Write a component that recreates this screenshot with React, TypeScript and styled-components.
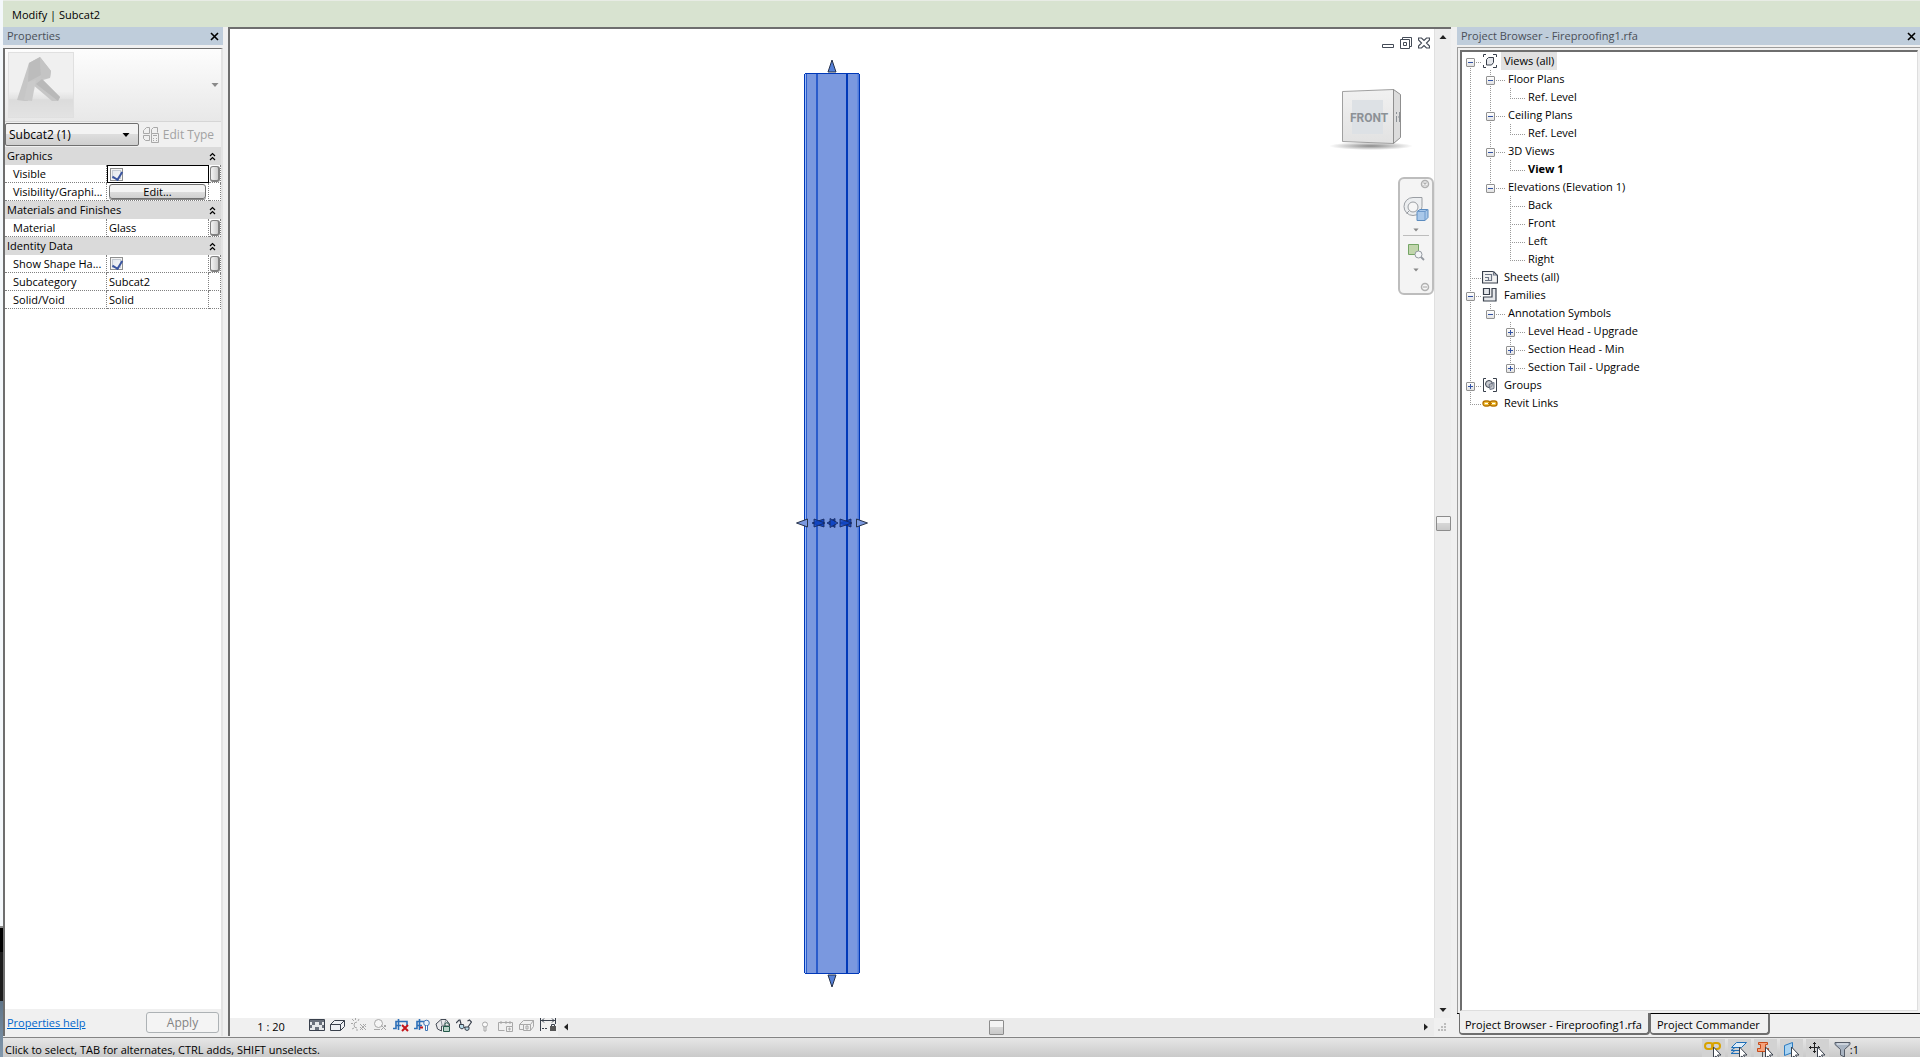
import React from "react";
import styled, { createGlobalStyle, css } from "styled-components";

const Global = createGlobalStyle`
  * { box-sizing: border-box; }
  html, body { margin: 0; padding: 0; }
  body, button, select, input {
    font-family: "Open Sans", "Noto Sans", sans-serif;
    font-size: 11px;
    line-height: 18px;
    color: #000;
  }
  svg { display: block; }
`;

/* ---------- shell ---------- */

const Shell = styled.div`
  display: flex;
  height: 100vh;
  overflow: hidden;
  background: #f0f0f0;
`;

const DesktopEdge = styled.div`
  flex: 0 0 3px;
  display: flex;
  flex-direction: column;
  background: #f4f8fb;
  &::after {
    content: "";
    height: 129px;
    margin-top: auto;
    border-top: 2px solid #8c8c8c;
    background: linear-gradient(#000 0 24px, #1c1c1c 24px 73px, #5f7488 73px, #8298ad);
  }
`;

const Frame = styled.div`
  flex: 1;
  min-width: 0;
  display: flex;
  flex-direction: column;
`;

const OptionsBar = styled.header`
  height: 27px;
  border-top: 1px solid #e8ece5;
  background: #d8e3d0;
  padding: 0 9px;
  line-height: 27px;
`;

const Workspace = styled.div`
  flex: 1;
  min-height: 0;
  display: flex;
`;

/* ---------- docked panels ---------- */

const Panel = styled.section<{ $width: number }>`
  flex: 0 0 ${(p) => p.$width}px;
  display: flex;
  flex-direction: column;
  min-height: 0;
`;

const PanelTitle = styled.div`
  display: flex;
  align-items: center;
  justify-content: space-between;
  height: 18px;
  padding: 0 4px;
  background: #bfcddb;
  color: #4a4f58;
`;

const PanelName = styled.h2`
  margin: 0;
  font-size: 11px;
  font-weight: 400;
  line-height: 20px;
`;

const IconButton = styled.button`
  display: flex;
  align-items: center;
  justify-content: center;
  padding: 0;
  border: 0;
  background: none;
`;

const PropertiesBody = styled.div`
  flex: 1;
  min-height: 0;
  display: flex;
  flex-direction: column;
  margin: 3px 0 1px;
  border-top: 1px solid #6e6e6e;
  border-left: 2px solid #6e6e6e;
  border-right: 2px solid #e3e3e3;
  background: #f0f0f0;
`;

const TypePicker = styled.button`
  display: flex;
  align-items: center;
  justify-content: space-between;
  height: 73px;
  padding: 2px 2px 2px 3px;
  border: 0;
  border-bottom: 1px solid #d6d6d6;
  background: linear-gradient(#fdfdfd, #e8e8e8);
`;

const TypeThumb = styled.span`
  width: 66px;
  height: 66px;
  border: 1px solid #e0e0e0;
  background: linear-gradient(#f0f0f0 0 60%, #dedede 75%, #ececec);
`;

const TypeRow = styled.div`
  display: flex;
  align-items: center;
  justify-content: space-between;
  height: 25px;
  padding-right: 7px;
`;

const SelectBox = styled.label`
  display: grid;
  grid-template-columns: 1fr 16px;
  align-items: center;
  width: 134px;
  height: 23px;
  border: 1px solid #707070;
  border-radius: 2px;
  background: linear-gradient(#f3f3f3 0 50%, #dddddd 50%, #cfcfcf);
  select {
    grid-area: 1 / 1 / 2 / 3;
    height: 21px;
    padding: 0 3px;
    border: 0;
    background: none;
    appearance: none;
    font-size: 12px;
  }
  svg {
    grid-area: 1 / 2 / 2 / 3;
    pointer-events: none;
  }
`;

const EditType = styled(IconButton)`
  gap: 3px;
  color: #a2a2a2;
  font-size: 12px;
`;

const GridPane = styled.div`
  flex: 1;
  min-height: 0;
  background: #fff;
`;

const PropTable = styled.table`
  width: 100%;
  table-layout: fixed;
  border-collapse: separate;
  border-spacing: 0;
`;

const GroupHead = styled.th`
  height: 18px;
  padding: 0 5px 0 2px;
  background: #dadada;
  font-weight: 400;
  text-align: left;
  div { display: flex; justify-content: space-between; align-items: center; }
`;

const cell = css`
  height: 18px;
  border-right: 1px dotted #808080;
  border-bottom: 1px dotted #808080;
  line-height: 17px;
  white-space: nowrap;
`;

const NameCell = styled.th`
  ${cell}
  padding: 0 0 0 8px;
  overflow: hidden;
  font-weight: 400;
  text-align: left;
`;

const ValueCell = styled.td<{ $active?: boolean }>`
  ${cell}
  padding: 0 2px;
  ${(p) => p.$active && "border: 1px solid #000; padding: 0 2px 0 1px;"}
`;

const LinkCell = styled.td`
  ${cell}
  padding: 0 0 0 1px;
`;

const Check = styled.input`
  display: block;
  appearance: none;
  width: 13px;
  height: 13px;
  margin: 1px;
  border: 1px solid #8e8f8f;
  background: #f4f4f4;
  box-shadow: inset 0 0 0 1px #f4f4f4, inset 0 0 0 2px #c4cad2;
  &:checked {
    background: linear-gradient(135deg, #dfe4ea, #fbfbfb);
  }
  &:checked::after {
    content: "";
    display: block;
    width: 5px;
    height: 8px;
    margin: 1px 3px 0;
    border: solid #3a55a0;
    border-width: 0 2px 2px 0;
    transform: rotate(32deg);
  }
`;

const EditButton = styled.button`
  display: block;
  width: 100%;
  height: 15px;
  padding: 0;
  border: 1px solid #707070;
  border-radius: 3px;
  background: linear-gradient(#f4f4f4 0 50%, #dedede 50%, #d0d0d0);
  box-shadow: 0 1px 0 #8a8a8a;
  line-height: 13px;
`;

const Associate = styled.button`
  display: block;
  width: 10px;
  height: 16px;
  padding: 0;
  border: 1px solid #808080;
  border-width: 1px 2px 2px 1px;
  border-radius: 3px;
  background: linear-gradient(90deg, #f4f4f4, #cccccc);
`;

const PanelFooter = styled.div`
  display: flex;
  align-items: center;
  justify-content: space-between;
  height: 27px;
  padding: 0 2px;
`;

const HelpLink = styled.a`
  color: #0066cc;
`;

const ApplyButton = styled.button`
  width: 73px;
  height: 21px;
  padding: 0;
  border: 1px solid #adb2b5;
  border-radius: 3px;
  background: #f4f4f4;
  color: #838383;
  font-size: 12px;
`;

/* ---------- drawing area ---------- */

const DrawingArea = styled.main`
  flex: 1;
  min-width: 0;
  display: flex;
  flex-direction: column;
  margin: 0 6px 1px 5px;
  border-top: 2px solid #6e6e6e;
  border-left: 2px solid #6e6e6e;
`;

const ViewRow = styled.div`
  flex: 1;
  min-height: 0;
  display: flex;
`;

const Canvas = styled.div`
  flex: 1;
  min-width: 0;
  position: relative;
  background: #fff;
  > svg { width: 100%; height: 100%; }
`;

const WindowButtons = styled.div`
  position: absolute;
  top: 8px;
  right: 4px;
  display: flex;
  gap: 6px;
`;

const ViewCube = styled.div`
  position: absolute;
  top: 60px;
  right: 20px;
`;

const NavBar = styled.div`
  position: absolute;
  top: 148px;
  right: 0;
  width: 36px;
  height: 118px;
  display: flex;
  flex-direction: column;
  align-items: center;
  padding: 0 2px;
  border: 2px solid #bdbdbd;
  border-radius: 6px;
  background: #f4f4f4;
`;

const NavCorner = styled(IconButton)`
  align-self: flex-end;
`;

const NavTool = styled(IconButton)`
  flex-direction: column;
  justify-content: flex-start;
  height: 46px;
  padding-top: 8px;
  gap: 6px;
`;

const NavRule = styled.hr`
  width: 26px;
  margin: 0;
  border: 0;
  border-top: 1px solid #bdbdbd;
`;

const VScroll = styled.div`
  flex: 0 0 17px;
  display: flex;
  flex-direction: column;
  align-items: center;
  justify-content: space-between;
  border-left: 1px solid #e0e0e0;
  background: #ededed;
`;

const HScroll = styled.div`
  flex: 1;
  display: flex;
  align-items: center;
  justify-content: space-between;
  height: 18px;
  background: #ebebeb;
`;

const ScrollArrow = styled(IconButton)`
  width: 16px;
  height: 16px;
`;

const Thumb = styled.button`
  width: 15px;
  height: 15px;
  padding: 0;
  border: 1px solid #8c8c8c;
  border-radius: 1px;
  background: linear-gradient(#f4f4f4 0 50%, #d6d6d6 50%, #c9c9c9);
`;

const ViewControls = styled.div`
  display: flex;
  align-items: center;
  height: 18px;
`;

const Scale = styled.button`
  width: 76px;
  padding: 0;
  padding-left: 6px;
  border: 0;
  background: none;
`;

const ControlButton = styled(IconButton)`
  align-items: flex-start;
  width: 21px;
  height: 18px;
`;

const Grip = styled.div`
  flex: 0 0 17px;
  height: 18px;
  padding: 5px 4px;
`;

/* ---------- project browser ---------- */

const BrowserFrame = styled.div`
  flex: 1;
  min-height: 0;
  margin-top: 2px;
  padding: 2px;
  border: 1px solid #9c9c9c;
  border-width: 1px 0 0 1px;
`;

const TreeBox = styled.div`
  height: 100%;
  border: 1px solid #dedede;
  border-top: 2px solid #6e6e6e;
  border-left: 2px solid #6e6e6e;
  background: #fff;
`;

const Tree = styled.ul`
  margin: 0;
  padding: 0;
  list-style: none;
`;

const TreeRow = styled.li`
  display: flex;
  height: 18px;
`;

type Guide = "full" | "top" | "bottom" | "none";
const guideSize: Record<Guide, string> = {
  full: "1px 100%",
  top: "1px 11px",
  bottom: "1px 8px",
  none: "0 0",
};

const GuideCell = styled.span<{ $v: Guide; $h?: number; $w: number }>`
  flex: 0 0 ${(p) => p.$w}px;
  height: 18px;
  padding: 6px 4px;
  background-image: repeating-linear-gradient(#999 0 1px, transparent 1px 2px),
    repeating-linear-gradient(90deg, #999 0 1px, transparent 1px 2px);
  background-repeat: no-repeat;
  background-size: ${(p) => guideSize[p.$v]}, ${(p) => p.$h || 0}px 1px;
  background-position: 8px ${(p) => (p.$v === "bottom" ? "10px" : "0")}, 8px 10px;
`;

const Toggle = styled.button`
  display: block;
  width: 9px;
  height: 9px;
  padding: 0;
  border: 1px solid #919191;
  border-radius: 1px;
  background: linear-gradient(#fff, #e2e2e2);
`;

const TreeIcon = styled.span`
  flex: 0 0 19px;
  padding-top: 1px;
`;

const TreeLabel = styled.span<{ $selected?: boolean; $strong?: boolean; $iconic?: boolean }>`
  padding: 0 ${(p) => (p.$iconic ? 3 : 0)}px;
  background: ${(p) => (p.$selected ? "#e1e1e1" : "none")};
  font-weight: ${(p) => (p.$strong ? 700 : 400)};
`;

const Tabs = styled.div`
  display: flex;
  height: 23px;
  margin-bottom: 1px;
  padding-left: 2px;
  background: linear-gradient(#000 0 1px, transparent 1px);
`;

const Tab = styled.button<{ $current?: boolean }>`
  height: 22px;
  padding: ${(p) => (p.$current ? "3px 6px 0 5px" : "2px 8px 0 6px")};
  border: 1px solid #6e6e6e;
  border-width: 0 2px 2px 1px;
  border-top: ${(p) => (p.$current ? "0" : "1px solid #000")};
  border-radius: 0 0 4px 4px;
  background: #f0f0f0;
`;

/* ---------- status bar ---------- */

const StatusBar = styled.footer`
  flex: 0 0 20px;
  display: flex;
  justify-content: space-between;
  border-top: 1px solid #848484;
  background: linear-gradient(#e6e6e6, #cacaca);
  overflow: hidden;
`;

const StatusText = styled.span`
  padding: 4px 2px 0;
  line-height: 15px;
`;

const StatusTools = styled.div`
  display: flex;
  gap: 3px;
  padding: 1px 61px 0 0;
`;

const StatusButton = styled(IconButton)<{ $flat?: boolean }>`
  width: 23px;
  height: 22px;
  align-items: flex-start;
  padding-top: 2px;
  background: ${(p) => (p.$flat ? "none" : "#d2d2d2")};
`;

const FilterCount = styled.span`
  margin-left: -8px;
  padding-top: 4px;
  line-height: 14px;
`;

/* ---------- drawings ---------- */

const CloseX = () => (
  <svg width="9" height="9" viewBox="0 0 9 9" stroke="#000" strokeWidth="1.6">
    <path d="M1 1l7 7M8 1L1 8" />
  </svg>
);

const Triangle = ({ dir = "down", size = 4, color = "#222" }: { dir?: string; size?: number; color?: string }) => {
  const angle = { down: 0, left: 90, up: 180, right: 270 }[dir];
  return (
    <svg width={size * 2} height={size * 2} viewBox="0 0 8 8">
      <path d="M0.5 2h7L4 6z" fill={color} transform={`rotate(${angle} 4 4)`} />
    </svg>
  );
};

const Chevrons = () => (
  <svg width="7" height="9" viewBox="0 0 7 9" fill="none" stroke="#000" strokeWidth="1.2">
    <path d="M1 4l2.5-2.5L6 4M1 8l2.500-2.500L6 8" />
  </svg>
);

const RevitMark = () => (
  <svg width="64" height="64" viewBox="0 0 64 64">
    <path d="M0 46h64v18H0z" fill="#d9d9d9" opacity=".5" />
    <path d="M20 10l11-6 11 14-1 7-7 2 17 17-2 4-6 0-20-17-4 17-4 0-7-1z" fill="#c6c6c6" />
    <path d="M20 10l11-6 1 18-13 7z" fill="#bcbcbc" />
    <path d="M31 4l11 14-1 7-9 0z" fill="#c4c4c4" />
    <path d="M19 29l8-2-4 21-8-1z" fill="#cacaca" />
    <path d="M33 26l18 18-2 4-22-17z" fill="#b9b9b9" />
  </svg>
);

const EditTypeIcon = () => (
  <svg width="17" height="16" viewBox="0 0 17 16" fill="none" stroke="#a8a8a8">
    <path d="M1.500 2.500l2-2h3v6h-6v-3zM8.500 6.500v-4l2-2h4v5M.5 8.500h6v5h-4l-2-2zM8.500 6.500h7v9h-7z" />
    <path d="M10 8.500h4M10 11.500h1M13 11.500h1M10 13.500h1M13 13.500h1" />
  </svg>
);

const Fireproofing = () => (
  <svg viewBox="0 0 1204 989" preserveAspectRatio="xMidYMid meet">
    <rect x="575" y="44" width="54" height="901" fill="#7a98df" />
    <path d="M575.500 45v899M627.500 45v899" stroke="#9bbcf8" />
    <path d="M574.500 45v899M629.500 45v899M575 44.500h54M575 944.500h54" stroke="#0038b8" />
    <path d="M576.500 45v899M628 45v899" stroke="#2a5bcb" />
    <path d="M587 45v899" stroke="#2a5bcb" strokeWidth="2" />
    <path d="M617 45v899" stroke="#0038b8" strokeWidth="2" />
    <path d="M602 31l4 12h-8zM602 958l4-12h-8z" fill="#5580d8" stroke="#26324a" />
    <path d="M566.500 494l11-4v8zM637.500 494l-11-4v8z" fill="#7a98df" stroke="#26324a" />
    <g fill="#1146c4" stroke="#14275a" strokeWidth=".8">
      <path d="M582 494l12-4v8zM597 494l8-4.500v9zM610 494l11-4v8z" />
      <path d="M595 494l-11-4v8zM608 494l-8-4.500v9zM622 494l-12-4v8z" fillOpacity=".8" />
    </g>
  </svg>
);

const CubeDrawing = () => (
  <svg width="86" height="64" viewBox="0 0 86 64">
    <defs>
      <linearGradient id="face" x1="0" y1="0" x2="0" y2="1">
        <stop offset="0" stopColor="#f1f1f1" />
        <stop offset="1" stopColor="#e2e2e2" />
      </linearGradient>
      <radialGradient id="shade">
        <stop offset="0" stopColor="#8a8a8a" />
        <stop offset="1" stopColor="#fff" />
      </radialGradient>
    </defs>
    <ellipse cx="43" cy="57" rx="42" ry="4" fill="url(#shade)" />
    <path d="M14.500 2.500l51-2v54l-51-2z" fill="url(#face)" stroke="#a0a0a0" />
    <path d="M65.500 .5l7 5v43l-7 6z" fill="#dcdcdc" stroke="#8f8f8f" />
    <path d="M24 11h31v34H24z" fill="#dde1e5" />
    <text x="22" y="33" fontSize="12" fontWeight="700" fontFamily="Roboto, sans-serif" fill="#8c9196">FRONT</text>
    <path d="M68.500 23v2M68.500 27v6M71.500 23v10M70 28h2" stroke="#8c9196" />
  </svg>
);

const Minimize = () => (
  <svg width="12" height="12" viewBox="0 0 12 12" fill="#fff" stroke="#444b57">
    <path d="M.5 7.500h11v3H.5z" />
  </svg>
);
const Restore = () => (
  <svg width="12" height="12" viewBox="0 0 12 12" fill="#fff" stroke="#444b57">
    <path d="M2.500 2V.5h9v9H10M.5 2.500h9v9h-9zM3.500 5.500h3v3h-3z" />
  </svg>
);
const CloseView = () => (
  <svg width="12" height="12" viewBox="0 0 12 12" fill="#fff" stroke="#444b57" strokeWidth="1.2">
    <path d="M.5 1h3L6 3.500 8.500 1h3v2L8.500 6l3 3v2h-3L6 8.500 3.500 11h-3V9l3-3-3-3z" />
  </svg>
);

const NavDot = ({ minus }: { minus?: boolean }) => (
  <svg width="10" height="10" viewBox="0 0 10 10" stroke="#b0b0b0" fill="none">
    <circle cx="5" cy="5" r="3.500" strokeWidth="1.500" />
    <path d={minus ? "M3 5h4" : "M3.500 3.500l3 3M6.500 3.500l-3 3"} strokeWidth="1.200" />
  </svg>
);

const WheelIcon = () => (
  <svg width="26" height="24" viewBox="0 0 26 24">
    <path d="M10 .5h9v9a9 9 0 1 1-9-9z" fill="#eceef0" stroke="#9a9ea3" />
    <circle cx="10" cy="10" r="5" fill="#f6f6f6" stroke="#9a9ea3" />
    <path d="M3.500 16.500l3-3" stroke="#9a9ea3" />
    <path d="M14 14.500l3-2h8v8l-3 3h-8z" fill="#a9c8ea" stroke="#5c8cbf" />
    <path d="M14 14.500h8v9M22 14.500l3-2" fill="none" stroke="#6f9acb" />
  </svg>
);
const ZoomRegionIcon = () => (
  <svg width="17" height="17" viewBox="0 0 17 17">
    <path d="M.5.5h10v10H.5z" fill="#c1d5ac" stroke="#74a565" />
    <circle cx="10.500" cy="10.500" r="3.500" fill="#f4f6f8" stroke="#9499a0" />
    <path d="M13 13l3 3" stroke="#9499a0" strokeWidth="1.800" />
  </svg>
);

const controlIcons: { name: string; art: React.ReactNode }[] = [
  { name: "Detail Level", art: (<><path d="M.5 1.500h15v11H.5z" fill="#e6e8ea" stroke="#39404c" /><path d="M1 2h14v2H1zM1 7h2v3H1zM3 4h3v3H3zM10 4h3v3h-3zM13 7h2v3h-2zM6 9h4v3H6z" fill="#6a717c" /></>) },
  { name: "Visual Style", art: <path d="M.5 6.500l4-4h10v6l-4 4H.5zM.5 6.500h10v6M10.500 6.500l4-4" fill="#eef0f4" stroke="#39404c" /> },
  { name: "Sun Path", art: (<><path d="M4.500 0v2M8 1l-1 2M0 5.500h2M1 11l2-1M6 4a3 3 0 0 0 0 6M6 13v-2M1 1l2 2" fill="none" stroke="#a8a8a8" /><path d="M9 6l6 6M15 6l-6 6M12 6l3 3M9 9l3 3" stroke="#a8a8a8" /></>) },
  { name: "Shadows", art: (<><circle cx="6.500" cy="5.500" r="4" fill="#f6f6f6" stroke="#a8a8a8" /><path d="M2 11.500h6M9 7l5 5M14 7l-5 5M12 7l2 2" stroke="#a8a8a8" /></>) },
  { name: "Crop View", art: (<><path d="M0 10.500h3v-7h11v4M3 7.500h5M5.500 1v11" fill="none" stroke="#2c6fb8" strokeWidth="1.600" /><path d="M9 7l6 6M15 7l-6 6" stroke="#c4161c" strokeWidth="2" /></>) },
  { name: "Show Crop Region", art: (<><path d="M0 10.500h3v-7h7M3 7.500h5M5.500 1v11" fill="none" stroke="#2c6fb8" strokeWidth="1.600" /><path d="M6 9.500h3" stroke="#c4161c" strokeWidth="2" /><circle cx="12.500" cy="5" r="2.800" fill="#e9f2fb" stroke="#3f74b4" /><path d="M11.500 8v4.500h2V8" fill="#fff" stroke="#3f74b4" /></>) },
  { name: "Lock 3D View", art: (<><path d="M1 6l5-4.500h5L14.500 6v2H6.500v5L2.500 11z" fill="#e8e8ea" stroke="#454b55" /><path d="M6 2l1 5M11 2L9 7" stroke="#8a9099" /><path d="M8.500 8.500h6v5h-6z" fill="#b9d3c8" stroke="#24594a" /><path d="M10 8V6.500a1.500 1.500 0 0 1 3.500 0" fill="none" stroke="#24594a" /></>) },
  { name: "Temporary Hide/Isolate", art: (<><path d="M0 5l3-3h1l1 4M12 9l3.500-5-2-2-2 1M8 9.500h1" fill="none" stroke="#39404c" strokeWidth="1.200" /><path d="M3.500 6.500h4l.5 3-2 1.500-2.500-1.500z" fill="#b9dbe8" stroke="#39404c" /><path d="M9 9h4v2.500l-2 1-2-1z" fill="#b9dbe8" stroke="#39404c" /></>) },
  { name: "Reveal Hidden Elements", art: (<><circle cx="8" cy="6.500" r="2.500" fill="#fafafa" stroke="#a8a8a8" /><path d="M7 9v4h2V9" fill="none" stroke="#a8a8a8" /></>) },
  { name: "Temporary View Properties", art: <path d="M.5 4.500h14v4M.5 4.500v8h6M3 3v3M8 3v3M12 3v3M8.500 8.500h6v5h-6zM11 10h1v2h-1z" fill="none" stroke="#a8a8a8" /> },
  { name: "Analytical Model", art: <path d="M.5 6.500l4-4h10v6l-3 4h-7v-6h7v6M11.500 6.500l3-4M.5 6.500v5h4M.5 6.500h4M7 8h2v3H7z" fill="none" stroke="#a8a8a8" /> },
  { name: "Reveal Constraints", art: (<><path d="M.5 0v13M15.500 0v6M1 2.500h14M4 .5L2 2.500l2 2M12 .5l2 2-2 2" fill="none" stroke="#39404c" /><path d="M2 10.500h6" stroke="#39404c" strokeDasharray="2 1" /><path d="M10 8h6v5h-6z" fill="#555" /><path d="M11.500 8V6.500h3V8" fill="none" stroke="#39404c" /></>) },
];

const treeIcons: Record<string, React.ReactNode> = {
  views: (<><path d="M4 1.500H1.500V4M11 1.500h3.500V4M4 14.500H1.500V12M11 14.500h3.500V12" fill="none" stroke="#39404c" /><path d="M4.500 6.500l2-2h5v5l-2 2.500h-5zM6.500 4.500" fill="#e6e8ec" stroke="#39404c" /></>),
  sheets: (<><path d="M.5 2.500h11l4 4v7.500H.5z" fill="#f2f2f2" stroke="#39404c" strokeWidth="1.200" /><path d="M11.500 2v4h4M3 5.500h6.500v6H3M3 8.500h3.500v3" fill="none" stroke="#6d7686" strokeWidth="1.200" /></>),
  families: (<path d="M1.500 1.500h6v6h-6zM10 1.500h4v12.500H1.500v-4H10z" fill="#e6e8ec" stroke="#39404c" strokeWidth="1.200" />),
  groups: (<><path d="M4 1.500H1.500v13H4M11 1.500h3.500v13H11" fill="none" stroke="#39404c" /><circle cx="7" cy="7" r="3.500" fill="#c9ccd2" stroke="#39404c" /><path d="M7 7.500l5-2v6l-4 1z" fill="#b0b4bc" fillOpacity=".7" stroke="#6d7686" /></>),
  links: (<><rect x="1" y="6" width="7" height="5" rx="2.500" fill="#f6c945" stroke="#b87400" strokeWidth="1.400" /><rect x="8" y="6" width="7" height="5" rx="2.500" fill="#f6c945" stroke="#b87400" strokeWidth="1.400" /><path d="M3 8.500h3M10 8.500h3" stroke="#fff" /><path d="M6 8.500h4" stroke="#b87400" /></>),
};

const Cursor = () => <path d="M9.500 6v11l2.500-2 2 4 1.500-1-2-4h3.500z" fill="#fff" stroke="#39404c" />;

const statusIcons: { name: string; art: React.ReactNode }[] = [
  { name: "Select Links", art: (<><rect x="1" y="2" width="8" height="6" rx="3" fill="none" stroke="#d8a300" strokeWidth="2" /><rect x="8" y="2" width="8" height="6" rx="3" fill="none" stroke="#d8a300" strokeWidth="2" /></>) },
  { name: "Select Underlay Elements", art: <path d="M6.500 1.500h10l-5 5h-10zM1 9.500h9M1 12.500h9M1 9.500l4-3M1 12.500l4-3" fill="#dcecf8" stroke="#1f6fb8" /> },
  { name: "Select Pinned Elements", art: (<><path d="M2.500 1.500h9v2h-2v4h3v3h-11v-3h3v-4h-2z" fill="#f4a27c" stroke="#c84a18" /><path d="M6.500 11v5" stroke="#555" /></>) },
  { name: "Select Elements by Face", art: <path d="M2.500 4.500l8-3v10l-8 3z" fill="#a9d3f2" stroke="#2b7bc0" /> },
  { name: "Drag Elements on Selection", art: <path d="M6.500 1v11M1 6.500h11M5 2.500h3M5 10.500h3M2.500 5v3M10.500 5v3" stroke="#222" /> },
];

const FilterIcon = () => (
  <svg width="18" height="18" viewBox="0 0 18 18">
    <path d="M1 1.500h15v2l-5.500 5V16l-4-2V8.500L1 3.500z" fill="#a9b4c2" stroke="#555c68" />
    <path d="M3 3h11" stroke="#eef1f5" />
  </svg>
);

/* ---------- data ---------- */

type Property = { name: string; kind: "check" | "button" | "text"; value?: string; link?: boolean; active?: boolean };
const groups: { title: string; rows: Property[] }[] = [
  { title: "Graphics", rows: [
    { name: "Visible", kind: "check", link: true, active: true },
    { name: "Visibility/Graphi...", kind: "button", value: "Edit..." },
  ] },
  { title: "Materials and Finishes", rows: [{ name: "Material", kind: "text", value: "Glass", link: true }] },
  { title: "Identity Data", rows: [
    { name: "Show Shape Ha...", kind: "check", link: true },
    { name: "Subcategory", kind: "text", value: "Subcat2" },
    { name: "Solid/Void", kind: "text", value: "Solid" },
  ] },
];

type Node = { label: string; guides: Guide[]; open?: boolean; icon?: string; selected?: boolean; strong?: boolean };
const nodes: Node[] = [
  { label: "Views (all)", guides: ["bottom"], open: true, icon: "views", selected: true },
  { label: "Floor Plans", guides: ["full", "full"], open: true },
  { label: "Ref. Level", guides: ["full", "full", "top"] },
  { label: "Ceiling Plans", guides: ["full", "full"], open: true },
  { label: "Ref. Level", guides: ["full", "full", "top"] },
  { label: "3D Views", guides: ["full", "full"], open: true },
  { label: "View 1", guides: ["full", "full", "top"], strong: true },
  { label: "Elevations (Elevation 1)", guides: ["full", "top"], open: true },
  { label: "Back", guides: ["full", "none", "full"] },
  { label: "Front", guides: ["full", "none", "full"] },
  { label: "Left", guides: ["full", "none", "full"] },
  { label: "Right", guides: ["full", "none", "top"] },
  { label: "Sheets (all)", guides: ["full"], icon: "sheets" },
  { label: "Families", guides: ["full"], open: true, icon: "families" },
  { label: "Annotation Symbols", guides: ["full", "top"], open: true },
  { label: "Level Head - Upgrade", guides: ["full", "none", "full"], open: false },
  { label: "Section Head - Min", guides: ["full", "none", "full"], open: false },
  { label: "Section Tail - Upgrade", guides: ["full", "none", "top"], open: false },
  { label: "Groups", guides: ["full"], open: false, icon: "groups" },
  { label: "Revit Links", guides: ["top"], icon: "links" },
];

const ToggleMark = ({ open }: { open: boolean }) => (
  <svg width="7" height="7" viewBox="0 0 7 7" stroke="#3353a4">
    <path d={open ? "M1 3.500h5" : "M1 3.500h5M3.500 1v5"} />
  </svg>
);

/* ---------- views ---------- */

const PropertyRow = ({ row }: { row: Property }) => {
  const id = `prop-${row.name}`;
  return (
    <tr>
      <NameCell scope="row">
        {row.kind === "check" ? <label htmlFor={id}>{row.name}</label> : row.name}
      </NameCell>
      <ValueCell $active={row.active}>
        {row.kind === "check" && <Check id={id} type="checkbox" defaultChecked />}
        {row.kind === "button" && <EditButton type="button">{row.value}</EditButton>}
        {row.kind === "text" && row.value}
      </ValueCell>
      <LinkCell>{row.link && <Associate type="button" aria-label={`Associate ${row.name}`} />}</LinkCell>
    </tr>
  );
};

const Properties = () => (
  <Panel $width={220}>
    <PanelTitle>
      <PanelName>Properties</PanelName>
      <IconButton type="button" aria-label="Close Properties"><CloseX /></IconButton>
    </PanelTitle>
    <PropertiesBody>
      <TypePicker type="button" aria-label="Type selector">
        <TypeThumb><RevitMark /></TypeThumb>
        <Triangle color="#8a8a8a" />
      </TypePicker>
      <TypeRow>
        <SelectBox>
          <select aria-label="Element filter"><option>Subcat2 (1)</option></select>
          <Triangle color="#000" />
        </SelectBox>
        <EditType type="button" disabled><EditTypeIcon />Edit Type</EditType>
      </TypeRow>
      <GridPane>
        <PropTable>
          <colgroup><col /><col width="102" /><col width="12" /></colgroup>
          <tbody>
            {groups.map((g) => (
              <React.Fragment key={g.title}>
                <tr>
                  <GroupHead colSpan={3} scope="colgroup">
                    <div>
                      {g.title}
                      <IconButton type="button" aria-label={`Collapse ${g.title}`}><Chevrons /></IconButton>
                    </div>
                  </GroupHead>
                </tr>
                {g.rows.map((r) => <PropertyRow key={r.name} row={r} />)}
              </React.Fragment>
            ))}
          </tbody>
        </PropTable>
      </GridPane>
      <PanelFooter>
        <HelpLink href="#help">Properties help</HelpLink>
        <ApplyButton type="button" disabled>Apply</ApplyButton>
      </PanelFooter>
    </PropertiesBody>
  </Panel>
);

const Drawing = () => (
  <DrawingArea>
    <ViewRow>
      <Canvas>
        <Fireproofing />
        <WindowButtons>
          <IconButton type="button" aria-label="Minimize"><Minimize /></IconButton>
          <IconButton type="button" aria-label="Restore"><Restore /></IconButton>
          <IconButton type="button" aria-label="Close"><CloseView /></IconButton>
        </WindowButtons>
        <ViewCube><CubeDrawing /></ViewCube>
        <NavBar>
          <NavCorner type="button" aria-label="Close navigation bar"><NavDot /></NavCorner>
          <NavTool type="button" aria-label="Steering wheel"><WheelIcon /><Triangle size={3} color="#888" /></NavTool>
          <NavRule />
          <NavTool type="button" aria-label="Zoom region"><ZoomRegionIcon /><Triangle size={3} color="#888" /></NavTool>
          <NavCorner type="button" aria-label="Customize navigation bar"><NavDot minus /></NavCorner>
        </NavBar>
      </Canvas>
      <VScroll>
        <ScrollArrow type="button" aria-label="Scroll up"><Triangle dir="up" size={4} /></ScrollArrow>
        <Thumb type="button" aria-label="Vertical scroll position" />
        <ScrollArrow type="button" aria-label="Scroll down"><Triangle size={4} /></ScrollArrow>
      </VScroll>
    </ViewRow>
    <ViewControls>
      <Scale type="button">1 : 20</Scale>
      {controlIcons.map((c) => (
        <ControlButton key={c.name} type="button" aria-label={c.name}>
          <svg width="16" height="16" viewBox="0 0 16 16">{c.art}</svg>
        </ControlButton>
      ))}
      <HScroll>
        <ScrollArrow type="button" aria-label="Scroll left"><Triangle dir="left" size={4} /></ScrollArrow>
        <Thumb type="button" aria-label="Horizontal scroll position" />
        <ScrollArrow type="button" aria-label="Scroll right"><Triangle dir="right" size={4} /></ScrollArrow>
      </HScroll>
      <Grip>
        <svg width="9" height="9" fill="#bdbdbd"><path d="M6 0h2v2H6zM3 3h2v2H3zM6 3h2v2H6zM0 6h2v2H0zM3 6h2v2H3zM6 6h2v2H6z" /></svg>
      </Grip>
    </ViewControls>
  </DrawingArea>
);

const Browser = () => (
  <Panel $width={463}>
    <PanelTitle>
      <PanelName>Project Browser - Fireproofing1.rfa</PanelName>
      <IconButton type="button" aria-label="Close Project Browser"><CloseX /></IconButton>
    </PanelTitle>
    <BrowserFrame>
      <TreeBox>
        <Tree>
          {nodes.map((n, i) => (
            <TreeRow key={i}>
              {n.guides.map((v, d) => {
                const last = d === n.guides.length - 1;
                return (
                  <GuideCell key={d} $v={v} $h={last ? (n.icon ? 11 : 15) : 0} $w={last && !n.icon ? 26 : 20}>
                    {last && n.open !== undefined && (
                      <Toggle type="button" aria-label={`Toggle ${n.label}`}><ToggleMark open={n.open} /></Toggle>
                    )}
                  </GuideCell>
                );
              })}
              {n.icon && <TreeIcon><svg width="16" height="16" viewBox="0 0 16 16">{treeIcons[n.icon]}</svg></TreeIcon>}
              <TreeLabel $selected={n.selected} $strong={n.strong} $iconic={!!n.icon}>{n.label}</TreeLabel>
            </TreeRow>
          ))}
        </Tree>
      </TreeBox>
    </BrowserFrame>
    <Tabs>
      <Tab type="button" $current>Project Browser - Fireproofing1.rfa</Tab>
      <Tab type="button">Project Commander</Tab>
    </Tabs>
  </Panel>
);

export default function App() {
  return (
    <>
      <Global />
      <Shell>
        <DesktopEdge />
        <Frame>
          <OptionsBar>Modify | Subcat2</OptionsBar>
          <Workspace>
            <Properties />
            <Drawing />
            <Browser />
          </Workspace>
          <StatusBar>
            <StatusText>Click to select, TAB for alternates, CTRL adds, SHIFT unselects.</StatusText>
            <StatusTools>
              {statusIcons.map((s) => (
                <StatusButton key={s.name} type="button" aria-label={s.name}>
                  <svg width="18" height="20" viewBox="0 0 18 20">{s.art}<Cursor /></svg>
                </StatusButton>
              ))}
              <StatusButton type="button" $flat aria-label="Filter"><FilterIcon /></StatusButton>
              <FilterCount>:1</FilterCount>
            </StatusTools>
          </StatusBar>
        </Frame>
      </Shell>
    </>
  );
}
